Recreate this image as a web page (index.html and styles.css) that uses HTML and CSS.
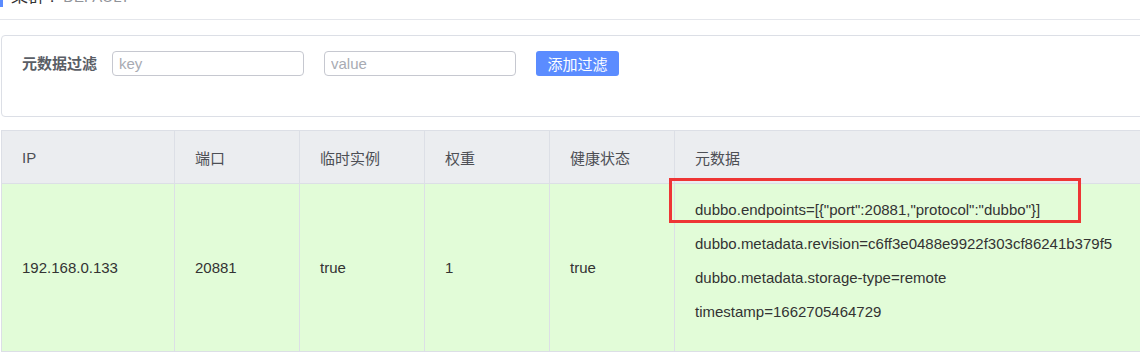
FILE: index.html
```html
<!DOCTYPE html>
<html lang="zh-CN">
<head>
<meta charset="utf-8">
<title>实例列表</title>
<link rel="stylesheet" href="styles.css">
</head>
<body>
<div class="page">
  <div class="cluster-title">
    <span class="cluster-name">集群 :</span>
    <span class="cluster-value">DEFAULT</span>
  </div>
  <div class="divider"></div>

  <div class="filter-card">
    <span class="filter-label">元数据过滤</span>
    <input class="filter-input" type="text" placeholder="key">
    <input class="filter-input value-input" type="text" placeholder="value">
    <button class="filter-btn" type="button">添加过滤</button>
  </div>

  <table class="instance-table">
    <colgroup>
      <col class="col-ip">
      <col class="col-std">
      <col class="col-std">
      <col class="col-std">
      <col class="col-std">
      <col>
    </colgroup>
    <thead>
      <tr>
        <th>IP</th>
        <th>端口</th>
        <th>临时实例</th>
        <th>权重</th>
        <th>健康状态</th>
        <th>元数据</th>
      </tr>
    </thead>
    <tbody>
      <tr>
        <td>192.168.0.133</td>
        <td>20881</td>
        <td>true</td>
        <td>1</td>
        <td>true</td>
        <td class="meta-cell">
          <div class="meta-list">
            <div class="meta-line highlighted">dubbo.endpoints=[{"port":20881,"protocol":"dubbo"}]</div>
            <div class="meta-line">dubbo.metadata.revision=c6ff3e0488e9922f303cf86241b379f5</div>
            <div class="meta-line">dubbo.metadata.storage-type=remote</div>
            <div class="meta-line">timestamp=1662705464729</div>
          </div>
        </td>
      </tr>
    </tbody>
  </table>
</div>
</body>
</html>
```

FILE: styles.css
```css
html, body {
  margin: 0;
  padding: 0;
  background: #ffffff;
  overflow: hidden;
}

body {
  font-family: "Liberation Sans", "Noto Sans CJK SC", sans-serif;
  font-size: 15px;
  color: #333333;
}

.page {
  width: 1180px;
}

.cluster-title {
  height: 20px;
  margin-top: -13px;
  border-left: 3px solid #5b8cff;
  padding-left: 8px;
  line-height: 20px;
  font-size: 17px;
  color: #333;
}

.cluster-value {
  margin-left: 4px;
  font-size: 15px;
  color: #909399;
}

.divider {
  margin-top: 12px;
  border-bottom: 1px solid #e4e6eb;
}

.filter-card {
  margin: 15px 0 0 1px;
  border: 1px solid #dcdfe6;
  border-radius: 4px;
  padding: 15px 0 0 20px;
  box-sizing: border-box;
  height: 82px;
  display: flex;
  align-items: flex-start;
}

.filter-label {
  font-size: 15px;
  font-weight: bold;
  color: #5a5e66;
  line-height: 26px;
  width: 90px;
}

.filter-input {
  width: 192px;
  height: 25px;
  box-sizing: border-box;
  border: 1px solid #c6c8d0;
  border-radius: 4px;
  padding: 0 6px;
  font-family: inherit;
  font-size: 15px;
  color: #333;
  outline: none;
}

.filter-input::placeholder {
  color: #a8abb3;
}

.value-input {
  margin-left: 20px;
}

.filter-btn {
  margin-left: 20px;
  height: 25px;
  width: 83px;
  border: none;
  border-radius: 3px;
  background: #5b8cff;
  color: #ffffff;
  font-family: inherit;
  font-size: 15px;
  padding: 0;
}

.instance-table {
  margin: 13px 0 0 1px;
  border-collapse: collapse;
  table-layout: fixed;
  width: 1179px;
}

.col-ip { width: 173px; }
.col-std { width: 125px; }

.instance-table th,
.instance-table td {
  border: 1px solid #dcdfe6;
  text-align: left;
  padding: 0 0 0 20px;
  font-weight: normal;
}

.instance-table th {
  background: #ebedf0;
  height: 52px;
  color: #4d4f55;
}

.instance-table td {
  background: #e2fcd8;
  height: 166px;
  color: #333;
  vertical-align: middle;
}

.meta-cell {
  vertical-align: top !important;
}

.meta-list {
  padding: 9px 0 22px;
}

.meta-line {
  line-height: 34px;
  white-space: nowrap;
}

.highlighted {
  position: relative;
}

.highlighted::after {
  content: "";
  position: absolute;
  left: -26px;
  top: -15px;
  width: 406px;
  height: 39px;
  border: 3px solid #ee3535;
}
```
